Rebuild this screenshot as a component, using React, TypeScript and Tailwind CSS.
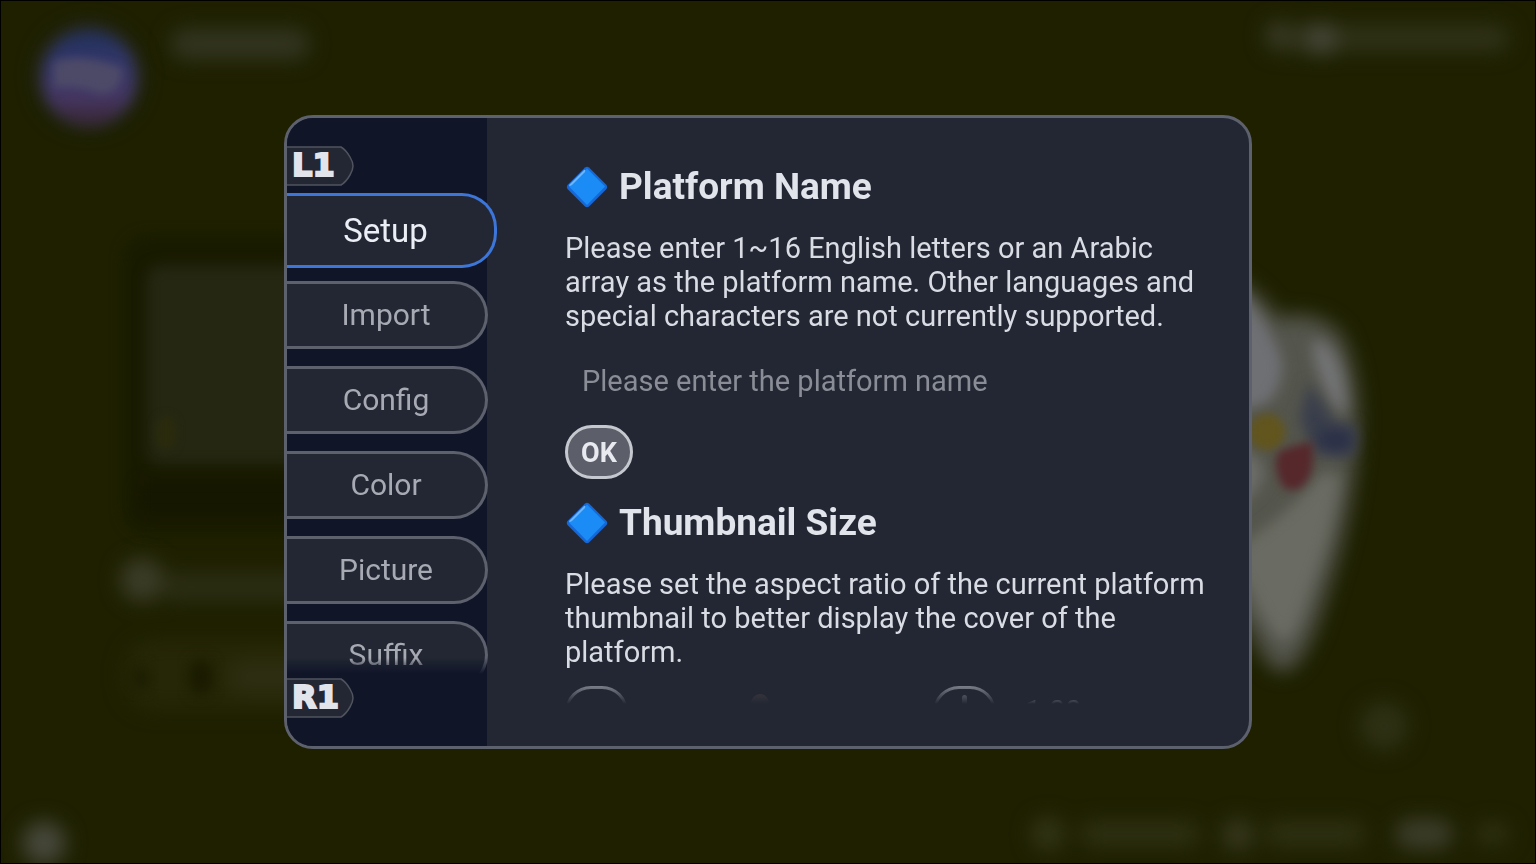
import { useState } from 'react'
import clsx from 'clsx'

const TABS = ['Setup', 'Import', 'Config', 'Color', 'Picture', 'Suffix']

/* ─── Blurred launcher behind the dialog ─── */

function Backdrop() {
  return (
    <svg
      className="absolute inset-0 h-full w-full"
      viewBox="0 0 1536 864"
      preserveAspectRatio="xMidYMid slice"
      aria-hidden="true"
    >
      <defs>
        <filter id="soft" x="-50%" y="-50%" width="200%" height="200%" colorInterpolationFilters="sRGB">
          <feGaussianBlur stdDeviation="7" />
        </filter>
        <filter id="dot" x="-50%" y="-50%" width="200%" height="200%" colorInterpolationFilters="sRGB">
          <feGaussianBlur stdDeviation="4" />
        </filter>
        <filter id="haze" x="-50%" y="-100%" width="200%" height="300%" colorInterpolationFilters="sRGB">
          <feGaussianBlur stdDeviation="10" />
        </filter>
        <linearGradient id="orb" x1="0" y1="0" x2="0" y2="1">
          <stop offset="0" stopColor="#20305c" />
          <stop offset="0.35" stopColor="#35386a" />
          <stop offset="0.7" stopColor="#453764" />
          <stop offset="1" stopColor="#3a2532" />
        </linearGradient>
      </defs>

      {/* avatar */}
      <circle cx="89" cy="76" r="52" fill="#292b2c" filter="url(#haze)" />
      <circle cx="89" cy="78" r="46" fill="url(#orb)" filter="url(#soft)" />
      <path d="M54 62 Q80 52 122 68 Q122 94 100 94 Q76 84 54 88Z" fill="#4d4a68" filter="url(#dot)" />

      {/* title and status bar */}
      <g filter="url(#haze)">
        <rect x="170" y="28" width="140" height="32" rx="16" fill="#32341f" />
        <rect x="1265" y="24" width="245" height="28" rx="14" fill="#2f3117" />
        <circle cx="1278" cy="34" r="13" fill="#393a25" />
        <circle cx="1321" cy="39" r="16" fill="#454638" />
      </g>

      {/* cover card */}
      <rect x="124" y="236" width="330" height="296" rx="24" fill="#191b00" filter="url(#soft)" />
      <rect x="147" y="266" width="300" height="198" rx="14" fill="#252712" filter="url(#soft)" />
      <rect x="156" y="416" width="20" height="34" rx="10" fill="#2a2b0d" filter="url(#dot)" />
      <rect x="138" y="480" width="310" height="36" rx="8" fill="#161700" filter="url(#soft)" />
      <g filter="url(#haze)">
        <circle cx="142" cy="580" r="22" fill="#3b3c27" />
        <rect x="160" y="572" width="200" height="30" rx="15" fill="#2b2d13" />
        <rect x="124" y="640" width="240" height="70" rx="30" fill="#262706" />
        <rect x="228" y="660" width="120" height="34" rx="17" fill="#2d2e12" />
      </g>
      <ellipse cx="141" cy="678" rx="9" ry="12" fill="#1c1d01" filter="url(#soft)" />
      <ellipse cx="201" cy="677" rx="12" ry="18" fill="#191a00" filter="url(#soft)" />

      {/* controller */}
      <path
        d="M1225 272 Q1258 289 1278 318 Q1318 308 1342 336 Q1362 380 1358 440 Q1352 520 1328 590 Q1306 668 1283 672 Q1266 670 1250 630 L1225 600Z"
        fill="#54554c"
        filter="url(#haze)"
      />
      <path d="M1225 280 Q1266 312 1282 360 Q1284 388 1266 404 L1225 414Z" fill="#6f7074" filter="url(#soft)" />
      <path d="M1312 340 Q1332 338 1342 374 Q1348 400 1344 416 Q1328 408 1314 360Z" fill="#727374" filter="url(#soft)" />
      <path d="M1308 382 L1338 426 L1356 424 L1354 456 L1316 454 L1300 420Z" fill="#393e4c" filter="url(#soft)" />
      <ellipse cx="1336" cy="440" rx="18" ry="11" fill="#2c3048" filter="url(#soft)" />
      <path d="M1225 446 Q1264 450 1264 476 Q1256 500 1225 512Z" fill="#6c6c68" filter="url(#soft)" />
      <path d="M1225 555 Q1290 515 1320 474 L1340 474 Q1334 530 1310 590 Q1296 638 1284 642 Q1268 632 1250 590Z" fill="#6a6b62" filter="url(#soft)" />
      <circle cx="1267" cy="432" r="18" fill="#62551d" filter="url(#dot)" />
      <path d="M1278 452 Q1296 444 1312 442 Q1316 470 1306 482 Q1298 494 1284 488 Q1272 470 1278 452Z" fill="#56282c" filter="url(#dot)" />

      {/* footer hints */}
      <g filter="url(#haze)">
        <circle cx="1384" cy="726" r="25" fill="#2e3014" />
        <circle cx="44" cy="843" r="22" fill="#46473a" />
        <circle cx="1048" cy="834" r="17" fill="#323416" />
        <rect x="1080" y="821" width="120" height="26" rx="13" fill="#2e3012" />
        <circle cx="1238" cy="835" r="17" fill="#35361c" />
        <rect x="1265" y="821" width="100" height="26" rx="13" fill="#2e3012" />
        <rect x="1395" y="819" width="58" height="30" rx="15" fill="#3c3d2a" />
        <rect x="1475" y="823" width="35" height="22" rx="11" fill="#2e3012" />
      </g>
    </svg>
  )
}

/* ─── Small pieces ─── */

function Diamond() {
  return (
    <svg className="h-[42px] w-11 shrink-0" viewBox="0 0 44 42" aria-hidden="true">
      <path
        d="M20 1.5 Q22 0 24 1.5 L41.5 19 Q43 21 41.5 23 L24 40.5 Q22 42 20 40.5 L2.5 23 Q1 21 2.5 19Z"
        fill="#1668d8"
      />
      <path d="M22 2.5 L40 20.5 L22 39 L4 20.5Z" fill="#1b8cf5" />
      <path d="M4 19 L19 4 Q21 3 20 6 L7 19 Q4 21 4 19Z" fill="#6db6fa" />
    </svg>
  )
}

function ShoulderKey({ label }: { label: string }) {
  return (
    <div className="relative h-10 w-[68px] shrink-0">
      <svg className="absolute inset-0 h-full w-full" viewBox="0 0 68 40" aria-hidden="true">
        <path
          d="M-2 1 H54 Q59 4 63 11 Q66 16 66 20 Q66 24 63 29 Q59 36 54 39 H-2Z"
          fill="#222733"
          stroke="#50545f"
          strokeWidth="1.5"
        />
      </svg>
      <kbd className="relative block pl-[5px] font-['DejaVu_Sans',sans-serif] text-[32px]/[38px] font-bold text-[#e2e4ec] [-webkit-text-stroke:2px_#e2e4ec]">
        {label}
      </kbd>
    </div>
  )
}

function SectionTitle({ children }: { children: string }) {
  return (
    <h2 className="flex items-center gap-[10px] text-[37px]/[42px] font-bold text-[#e2e4ec]">
      <Diamond />
      {children}
    </h2>
  )
}

/* ─── Dialog parts ─── */

function Sidebar() {
  const [active, setActive] = useState('Setup')

  return (
    <nav className="relative z-10 flex w-[200px] shrink-0 flex-col rounded-l-[26px] bg-[#101528] py-7">
      <ShoulderKey label="L1" />
      <ul className="mb-1 min-h-0 w-[210px] flex-1 overflow-hidden pt-[7px] [mask-image:linear-gradient(to_top,transparent,black_16px)]">
        {TABS.map(tab => (
          <li key={tab} className={tab === active ? 'mb-[13px]' : 'mb-[17px]'}>
            <button
              type="button"
              onClick={() => setActive(tab)}
              className={clsx(
                'block rounded-r-[35px] border-[3px] border-l-0 bg-[#222733]',
                tab === active
                  ? 'h-[75px] w-[210px] border-[#3d76d8] pr-[10px] text-[33px]/[40px] text-[#eceef5]'
                  : 'h-[68px] w-[201px] border-[#5d606d] text-[30px]/[36px] text-[#a8aab3]',
              )}
            >
              {tab}
            </button>
          </li>
        ))}
      </ul>
      <ShoulderKey label="R1" />
    </nav>
  )
}

function RatioButton({ label }: { label: string }) {
  return (
    <button
      type="button"
      aria-label={label}
      className="flex h-[54px] w-[63px] items-start justify-center rounded-[26px] border-[3px] border-[#858892] pt-[6px]"
    >
      {label === 'Next ratio' && <span className="h-5 w-[5px] rounded-full bg-[#858892]" />}
    </button>
  )
}

function Settings() {
  return (
    <main className="mb-[42px] min-w-0 flex-1 overflow-hidden pt-12 pr-[37px] pl-[78px] [mask-image:linear-gradient(to_top,transparent,black_20px)]">
      <SectionTitle>Platform Name</SectionTitle>
      <p className="mt-[23px] text-[29px]/[34px] text-[#dadce4]">
        Please enter 1~16 English letters or an Arabic array as the platform name. Other languages and special
        characters are not currently supported.
      </p>
      <input
        type="text"
        aria-label="Platform name"
        placeholder="Please enter the platform name"
        className="mt-[18px] block h-[60px] w-full bg-transparent px-[17px] text-[29px]/[34px] text-[#dadce4] outline-none placeholder:text-[#8a8d96]"
      />
      <button
        type="button"
        className="mt-[14px] block h-[54px] w-[68px] rounded-[27px] border-[3px] border-[#c6c8cf] bg-[#5c5f6a] pt-[2px] text-[27px]/[32px] font-bold text-[#e8eaf0]"
      >
        OK
      </button>

      <div className="mt-[23px]">
        <SectionTitle>Thumbnail Size</SectionTitle>
      </div>
      <p className="mt-[23px] text-[29px]/[34px] text-[#dadce4]">
        Please set the aspect ratio of the current platform thumbnail to better display the cover of the platform.
      </p>
      <div className="mt-[17px] flex items-start">
        <RatioButton label="Previous ratio" />
        <span className="mt-[8px] ml-[123px] h-[18px] w-[18px] rounded-full bg-[#4a4042]" />
        <div className="ml-[164px]">
          <RatioButton label="Next ratio" />
        </div>
        <span className="mt-[8px] ml-[29px] text-[29px]/[34px] text-[#dadce4]">1.00</span>
      </div>
    </main>
  )
}

export default function App() {
  return (
    <div className="relative flex min-h-screen items-center justify-center overflow-hidden bg-[#1e2000] font-['Roboto','Liberation_Sans',sans-serif]">
      <Backdrop />
      <div className="pointer-events-none absolute inset-0 border border-black" />
      <div
        role="dialog"
        aria-label="Platform settings"
        className="relative flex h-[calc(100vh-230px)] w-[calc(100vw-568px)] rounded-[29px] border-[3px] border-[#5d606d] bg-[#222733]"
      >
        <Sidebar />
        <Settings />
      </div>
    </div>
  )
}
